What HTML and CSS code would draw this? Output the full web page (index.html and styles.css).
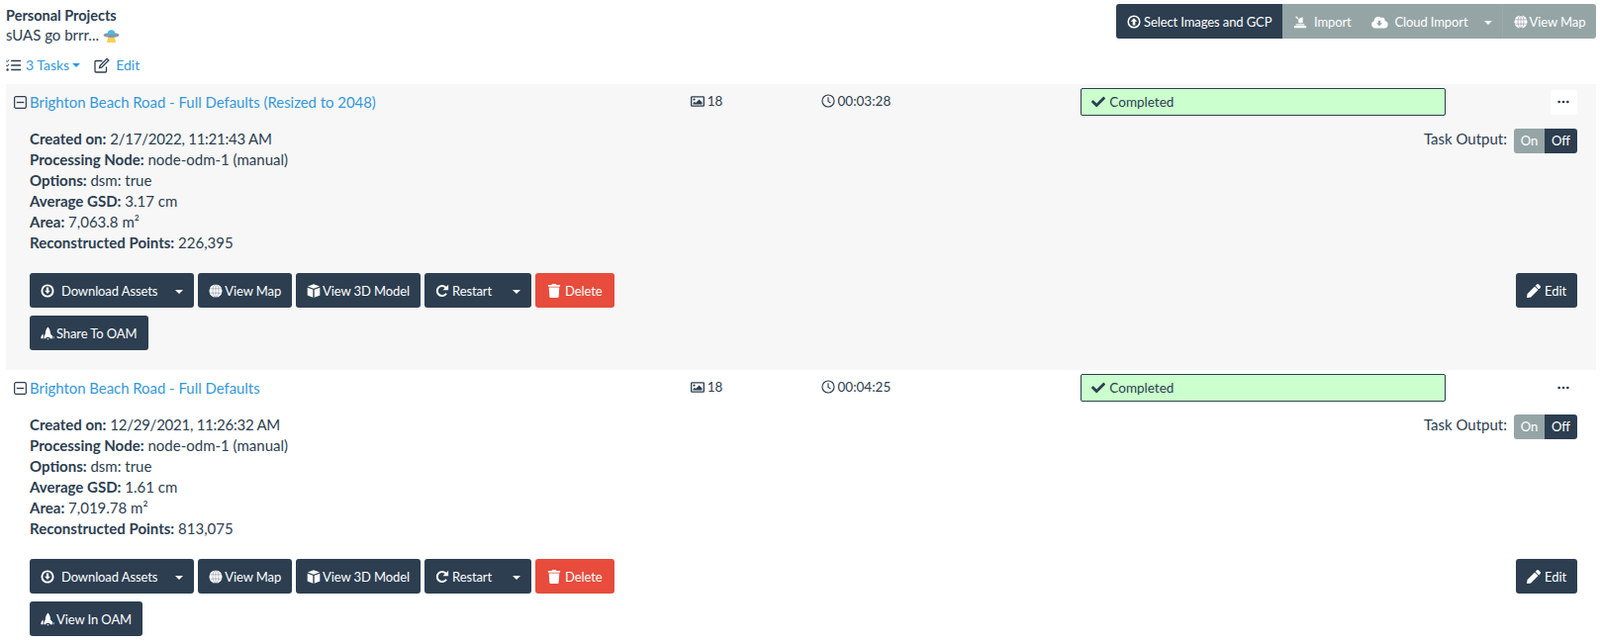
FILE: index.html
```html
<!DOCTYPE html>
<html lang="en">
<head>
  <meta charset="UTF-8" />
  <title>Personal Projects</title>
  <link rel="stylesheet" href="styles.css">
</head>
<body>
  <svg class="defs" width="0" height="0">
    <symbol id="i-upload" viewBox="0 0 16 16"><path fill="currentColor" fill-rule="evenodd" d="M8 .5a7.5 7.5 0 1 1 0 15 7.500 7.500 0 0 1 0-15zm0 1.800a5.700 5.700 0 1 0 0 11.400A5.700 5.700 0 0 0 8 2.300zM8 3.700 11.800 7.800H9.500V12h-3V7.800H4.200z"/></symbol>
    <symbol id="i-download" viewBox="0 0 16 16"><path fill="currentColor" fill-rule="evenodd" d="M8 .5a7.5 7.5 0 1 1 0 15 7.500 7.500 0 0 1 0-15zm0 2.200a5.300 5.300 0 1 0 0 10.600A5.300 5.300 0 0 0 8 2.700zM6.700 4h2.600v3.800h2L8 11.400 4.700 7.800h2z"/></symbol>
    <symbol id="i-import" viewBox="0 0 16 16"><path fill="currentColor" d="M1 12.500h14V15H1zM3 10.500h10V12H3zM6 4.500l5-2v7H6zM3.500 1.500 6 4l-1 1-2.500-2.500z"/></symbol>
    <symbol id="i-cloud" viewBox="0 0 20 16"><path fill="currentColor" fill-rule="evenodd" d="M16.300 6.900A3 3 0 0 0 12 3.300 5 5 0 0 0 3.800 7.200 4.300 4.300 0 0 0 5 15.500h11.500a4.400 4.400 0 0 0-.2-8.600zM8.700 6.500h2.600v3h2L10 13 6.700 9.500h2z"/></symbol>
    <symbol id="i-globe" viewBox="0 0 16 16"><circle cx="8" cy="8" r="7.500" fill="currentColor"/><g fill="none" stroke="#2c3e50" stroke-opacity=".45" stroke-width=".8"><ellipse cx="8" cy="8" rx="3.400" ry="7.500"/><path d="M.5 5.500h15M.5 10.500h15M8 .5v15"/></g></symbol>
    <symbol id="i-cube" viewBox="0 0 16 16"><path fill="currentColor" d="M8 .3 15 2.800 8 5.500 1 2.800zM.8 4.200l6.400 2.500v9L.8 13zM15.200 4.200V13l-6.400 2.700v-9z"/></symbol>
    <symbol id="i-redo" viewBox="0 0 16 16"><path fill="none" stroke="currentColor" stroke-width="2.300" d="M12.700 11.200A5.800 5.800 0 1 1 12.400 4.300"/><path fill="currentColor" d="M15 .8v6.400H8.600z"/></symbol>
    <symbol id="i-trash" viewBox="0 0 448 512"><path fill="currentColor" d="M432 32H312l-9.400-18.700A24 24 0 0 0 281.100 0H166.800a23.720 23.720 0 0 0-21.400 13.300L136 32H16A16 16 0 0 0 0 48v32a16 16 0 0 0 16 16h416a16 16 0 0 0 16-16V48a16 16 0 0 0-16-16zM53.200 467a48 48 0 0 0 47.900 45h245.800a48 48 0 0 0 47.900-45L416 128H32z"/></symbol>
    <symbol id="i-pencil" viewBox="0 0 512 512"><path fill="currentColor" d="M497.900 142.100l-46.100 46.100c-4.700 4.700-12.300 4.700-17 0l-111-111c-4.700-4.700-4.700-12.300 0-17l46.100-46.100c18.700-18.700 49.100-18.700 67.900 0l60.100 60.100c18.800 18.700 18.800 49.100 0 67.900zM284.200 99.800L21.600 362.400.4 483.900c-2.900 16.400 11.400 30.600 27.800 27.800l121.500-21.300 262.600-262.600c4.700-4.700 4.700-12.300 0-17l-111-111c-4.800-4.700-12.400-4.700-17.100 0z"/></symbol>
    <symbol id="i-check" viewBox="0 0 512 512"><path fill="currentColor" d="M173.898 439.404l-166.400-166.400c-9.997-9.997-9.997-26.206 0-36.204l36.203-36.204c9.997-9.998 26.207-9.998 36.204 0L192 312.690 432.095 72.596c9.997-9.997 26.207-9.997 36.204 0l36.203 36.204c9.997 9.997 9.997 26.206 0 36.204l-294.400 294.401c-9.998 9.997-26.207 9.997-36.204-.001z"/></symbol>
    <symbol id="i-rocket" viewBox="0 0 16 16"><path fill="currentColor" d="M8.500.5c2 2 3 5 3 8l2.500 3v2.500H11L10.500 12.500h-4L6 14H4v-2.500L5.500 8.500c0-3 1-6 3-8zM7 14h3l-1.500 1.500zM1.500 10 3 8.500V14H.5v-2zM15.500 11.500V14H15v-2.500z"/></symbol>
    <symbol id="i-minus" viewBox="0 0 14 14"><rect x=".7" y=".7" width="12.600" height="12.600" rx="1.500" fill="none" stroke="currentColor" stroke-width="1.300"/><path d="M3 7h8" stroke="currentColor" stroke-width="1.400"/></symbol>
    <symbol id="i-image" viewBox="0 0 16 14"><path fill="currentColor" fill-rule="evenodd" d="M1.500 1h13A1.500 1.500 0 0 1 16 2.500v9a1.500 1.500 0 0 1-1.500 1.500h-13A1.500 1.500 0 0 1 0 11.500v-9A1.500 1.500 0 0 1 1.500 1zM1.500 2.500v9h13v-9zM4 3.500a1.300 1.300 0 1 1 0 2.600 1.300 1.300 0 0 1 0-2.600zM2.800 10.500V9L4.500 7.300l1.300 1.300 4-4 3.400 3.400v2.500z"/></symbol>
    <symbol id="i-clock" viewBox="0 0 16 16"><circle cx="8" cy="8" r="6.900" fill="none" stroke="currentColor" stroke-width="1.300"/><path d="M8 3.800V8.500l2.800 1.800" fill="none" stroke="currentColor" stroke-width="1.300"/></symbol>
    <symbol id="i-tasks" viewBox="0 0 16 14"><path fill="currentColor" d="M5.500 1.500H16V3H5.500zM5.500 6.200H16v1.600H5.500zM5.500 11H16v1.500H5.500zM.5 1.800 1.300 2.600 3 .8l.6.6L1.300 3.800 0 2.400zM.5 6.500l.8.8L3 5.500l.6.600-2.300 2.400L0 7.100zM1.700 10.500a1.300 1.300 0 1 1 0 2.600 1.300 1.300 0 0 1 0-2.600z"/></symbol>
    <symbol id="i-edit" viewBox="0 0 16 16"><path d="M12.500 9.500V14a1 1 0 0 1-1 1H2a1 1 0 0 1-1-1V4.500a1 1 0 0 1 1-1h6.500" fill="none" stroke="currentColor" stroke-width="1.300"/><path d="M6 8.500 13 1.300 14.800 3 7.700 10.200l-2.200.4z" fill="none" stroke="currentColor" stroke-width="1.300"/></symbol>
    <symbol id="i-dots" viewBox="0 0 16 4"><circle cx="2.200" cy="2" r="1.800" fill="currentColor"/><circle cx="8" cy="2" r="1.800" fill="currentColor"/><circle cx="13.800" cy="2" r="1.800" fill="currentColor"/></symbol>
  </svg>

  <header class="project-head">
    <div class="project-info">
      <div class="project-name">Personal Projects</div>
      <div class="project-desc">sUAS go brrr...
        <svg class="ufo" viewBox="0 0 18 16"><path fill="#f6cf57" d="M6 9h6l2 7H4z"/><ellipse cx="9" cy="8" rx="8.500" ry="2.600" fill="#8a97a3"/><path fill="#4fb7e6" d="M5 6.500a4 4 0 0 1 8 0l-1 1H6z"/></svg>
      </div>
      <div class="project-links">
        <span class="link-item"><svg class="ico tasks-ico"><use href="#i-tasks"/></svg><a>3 Tasks</a><span class="caret link-caret"></span></span>
        <span class="link-item"><svg class="ico edit-ico"><use href="#i-edit"/></svg><a>Edit</a></span>
      </div>
    </div>
    <div class="btn-group">
      <button class="btn btn-main"><svg class="ico"><use href="#i-upload"/></svg>Select Images and GCP</button>
      <button class="btn btn-grey btn-import"><svg class="ico"><use href="#i-import"/></svg>Import</button>
      <button class="btn btn-grey btn-cloud"><svg class="ico cloud-ico"><use href="#i-cloud"/></svg>Cloud Import<span class="caret"></span></button>
      <button class="btn btn-grey btn-map"><svg class="ico"><use href="#i-globe"/></svg>View Map</button>
    </div>
  </header>

  <section class="task task-open">
    <div class="task-top">
      <div class="task-name"><svg class="ico minus-ico"><use href="#i-minus"/></svg><a>Brighton Beach Road - Full Defaults (Resized to 2048)</a></div>
      <div class="task-images"><svg class="ico image-ico"><use href="#i-image"/></svg>18</div>
      <div class="task-time"><svg class="ico clock-ico"><use href="#i-clock"/></svg>00:03:28</div>
      <div class="task-status"><svg class="ico check-ico"><use href="#i-check"/></svg>Completed</div>
      <div class="task-menu"><span class="menu-btn menu-active"><svg class="dots"><use href="#i-dots"/></svg></span></div>
    </div>
    <div class="task-body">
      <div class="stats">
        <div><b>Created on:</b> <span class="date">2/17/2022, 11:21:43 AM</span></div>
        <div><b>Processing Node:</b> node-odm-1 (manual)</div>
        <div><b>Options:</b> dsm: true</div>
        <div><b>Average GSD:</b> 3.17 cm</div>
        <div><b>Area:</b> 7,063.8 m²</div>
        <div><b>Reconstructed Points:</b> 226,395</div>
      </div>
      <div class="output"><span>Task Output:</span><div class="toggle"><span class="toggle-on">On</span><span class="toggle-off">Off</span></div></div>
    </div>
    <div class="actions">
      <div class="action-list">
        <button class="btn btn-action btn-assets"><svg class="ico"><use href="#i-download"/></svg>Download Assets<span class="caret"></span></button>
        <button class="btn btn-action"><svg class="ico"><use href="#i-globe"/></svg>View Map</button>
        <button class="btn btn-action"><svg class="ico"><use href="#i-cube"/></svg>View 3D Model</button>
        <button class="btn btn-action btn-restart"><svg class="ico"><use href="#i-redo"/></svg>Restart<span class="caret"></span></button>
        <button class="btn btn-delete"><svg class="ico"><use href="#i-trash"/></svg>Delete</button>
        <button class="btn btn-action"><svg class="ico"><use href="#i-rocket"/></svg>Share To OAM</button>
      </div>
      <button class="btn btn-action btn-edit"><svg class="ico"><use href="#i-pencil"/></svg>Edit</button>
    </div>
  </section>

  <section class="task">
    <div class="task-top">
      <div class="task-name"><svg class="ico minus-ico"><use href="#i-minus"/></svg><a>Brighton Beach Road - Full Defaults</a></div>
      <div class="task-images"><svg class="ico image-ico"><use href="#i-image"/></svg>18</div>
      <div class="task-time"><svg class="ico clock-ico"><use href="#i-clock"/></svg>00:04:25</div>
      <div class="task-status"><svg class="ico check-ico"><use href="#i-check"/></svg>Completed</div>
      <div class="task-menu"><span class="menu-btn"><svg class="dots"><use href="#i-dots"/></svg></span></div>
    </div>
    <div class="task-body">
      <div class="stats">
        <div><b>Created on:</b> <span class="date">12/29/2021, 11:26:32 AM</span></div>
        <div><b>Processing Node:</b> node-odm-1 (manual)</div>
        <div><b>Options:</b> dsm: true</div>
        <div><b>Average GSD:</b> 1.61 cm</div>
        <div><b>Area:</b> 7,019.78 m²</div>
        <div><b>Reconstructed Points:</b> 813,075</div>
      </div>
      <div class="output"><span>Task Output:</span><div class="toggle"><span class="toggle-on">On</span><span class="toggle-off">Off</span></div></div>
    </div>
    <div class="actions">
      <div class="action-list">
        <button class="btn btn-action btn-assets"><svg class="ico"><use href="#i-download"/></svg>Download Assets<span class="caret"></span></button>
        <button class="btn btn-action"><svg class="ico"><use href="#i-globe"/></svg>View Map</button>
        <button class="btn btn-action"><svg class="ico"><use href="#i-cube"/></svg>View 3D Model</button>
        <button class="btn btn-action btn-restart"><svg class="ico"><use href="#i-redo"/></svg>Restart<span class="caret"></span></button>
        <button class="btn btn-delete"><svg class="ico"><use href="#i-trash"/></svg>Delete</button>
        <button class="btn btn-action"><svg class="ico"><use href="#i-rocket"/></svg>View In OAM</button>
      </div>
      <button class="btn btn-action btn-edit"><svg class="ico"><use href="#i-pencil"/></svg>Edit</button>
    </div>
  </section>
</body>
</html>
```

FILE: styles.css
```css
html, body {
  height: 650px;
  overflow: hidden;
}

body {
  margin: 0;
  padding: 0 4px 0 6px;
  background: #fff;
  color: #2c3e50;
  font-family: Lato, sans-serif;
  font-size: 15px;
  line-height: 21px;
}

.defs {
  position: absolute;
}

a {
  color: #3498db;
}

.ico {
  width: 14px;
  height: 14px;
  margin-right: 2px;
  flex: none;
  vertical-align: -2px;
}

.project-head {
  display: flex;
  justify-content: space-between;
  height: 85px;
}

.project-info {
  padding-top: 5px;
}

.project-name {
  font-size: 14.500px;
  font-weight: 700;
}

.project-desc {
  height: 21px;
  margin-top: -1px;
}

.ufo {
  width: 17px;
  height: 15px;
  vertical-align: -2px;
}

.project-links {
  display: flex;
  gap: 14px;
  margin-top: 9px;
  font-size: 14px;
}

.link-item {
  display: flex;
  align-items: center;
}

.tasks-ico {
  width: 15px;
  margin-right: 5px;
}

.edit-ico {
  width: 16px;
  height: 16px;
  margin-right: 6px;
}

.caret {
  display: inline-block;
  width: 0;
  height: 0;
  margin-left: 16px;
  border-top: 4px solid;
  border-left: 4px solid transparent;
  border-right: 4px solid transparent;
  vertical-align: 2px;
}

.link-caret {
  margin-left: 3px;
  color: #3498db;
}

.btn {
  height: 35px;
  padding: 0 11px;
  border: none;
  border-radius: 3px;
  color: #fff;
  font-family: inherit;
  font-size: 13px;
  letter-spacing: -0.1px;
  white-space: nowrap;
}

.btn-group {
  display: flex;
  margin-top: 4px;
  height: 35px;
}

.btn-group .btn {
  border-radius: 0;
}

.btn-main {
  width: 168px;
  background: #2c3e50;
  border-radius: 3px 0 0 3px !important;
}

.btn-main .ico {
  margin-right: 3px;
}

.btn-grey {
  background: #95a5a6;
}

.btn-import {
  width: 79px;
}

.btn-import .ico {
  margin-right: 7px;
}

.btn-cloud {
  width: 143px;
  padding: 0;
}

.cloud-ico {
  width: 18px;
  margin-right: 6px;
}

.btn-map {
  width: 95px;
  padding: 0;
  border-left: 1px solid #9aa9aa;
  border-radius: 0 3px 3px 0 !important;
}

.task {
  padding-top: 4px;
  height: 285px;
}

.task-open {
  background: #f7f7f7;
}

.task-top {
  display: grid;
  grid-template-columns: 41.67% 8.33% 16.67% 25% 8.33%;
  height: 28px;
  align-items: center;
}

.task-name {
  display: flex;
  align-items: center;
  padding-left: 8px;
  font-size: 14.900px;
}

.minus-ico {
  width: 13px;
  height: 13px;
  margin-right: 3px;
}

.task-images {
  display: flex;
  align-items: center;
  padding-left: 22px;
  margin-top: -2px;
  font-size: 13.500px;
}

.task-time {
  display: flex;
  align-items: center;
  padding-left: 21px;
  margin-top: -2px;
  font-size: 13.500px;
}

.image-ico {
  width: 14px;
  height: 13px;
  margin-right: 3px;
}

.clock-ico {
  margin-right: 2px;
}

.task-status {
  display: flex;
  align-items: center;
  margin-left: 15px;
  margin-right: 18px;
  height: 28px;
  padding-left: 10px;
  background: #cbffcd;
  border: 1px solid #2c3e50;
  border-radius: 2px;
  box-sizing: border-box;
  font-size: 13.500px;
}

.check-ico {
  width: 14px;
  height: 14px;
  margin-right: 4px;
}

.task-menu {
  display: flex;
  justify-content: flex-end;
  padding-right: 19px;
}

.menu-btn {
  display: flex;
  align-items: center;
  justify-content: center;
  width: 27px;
  height: 25px;
  border-radius: 3px;
}

.menu-active {
  background: #fff;
}

.dots {
  width: 12px;
  height: 4px;
}

.task-body {
  display: flex;
  justify-content: space-between;
  margin-top: 13px;
  padding: 0 19px 0 24px;
}

.stats {
  line-height: 21px;
}

.date {
  letter-spacing: -0.25px;
}

.output {
  display: flex;
  gap: 7px;
  align-items: flex-start;
  line-height: 21px;
}

.toggle {
  display: flex;
  border-radius: 3px;
  overflow: hidden;
  font-size: 13px;
  line-height: 25px;
  color: #fff;
  text-align: center;
}

.toggle-on {
  width: 31px;
  background: #95a5a6;
}

.toggle-off {
  width: 33px;
  background: #2c3e50;
}

.actions {
  display: flex;
  justify-content: space-between;
  align-items: flex-start;
  margin-top: 20px;
  padding: 0 19px 0 24px;
}

.action-list {
  display: flex;
  flex-wrap: wrap;
  gap: 8px 4px;
  max-width: 700px;
}

.btn-action {
  background: #2c3e50;
}

.btn-delete {
  padding: 0 12px;
  background: #e74c3c;
}

.btn-delete .ico {
  margin-right: 4px;
}

.btn-assets .ico {
  margin-right: 7px;
}

.btn-assets .caret {
  margin-left: 18px;
}

.btn-restart .ico {
  margin-right: 3px;
}

.btn-restart .caret {
  margin-left: 21px;
}

.btn-edit .ico {
  margin-right: 4px;
}
```
